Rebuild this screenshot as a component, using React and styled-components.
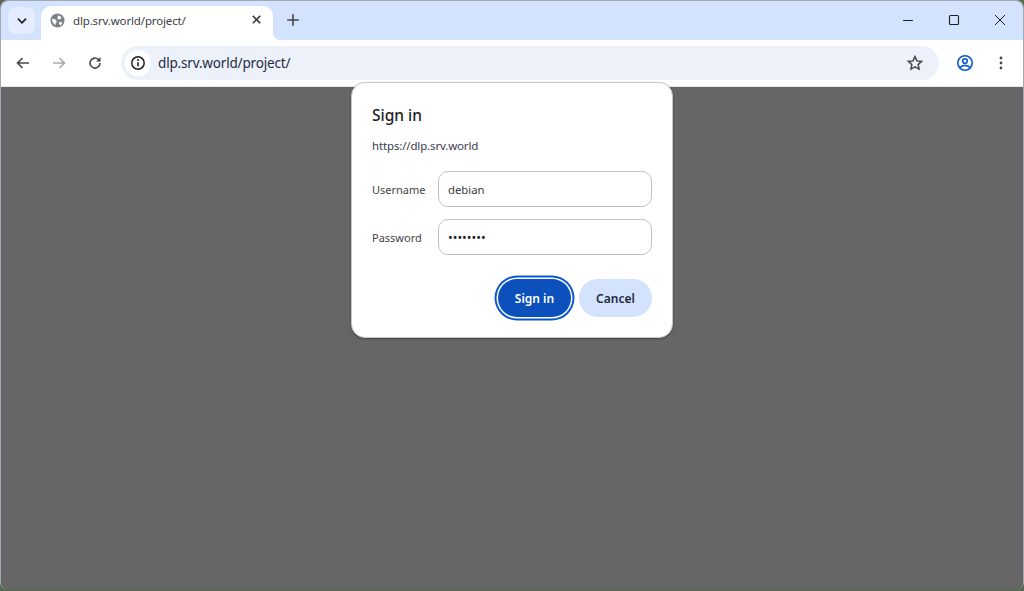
import React from 'react';
import styled, { createGlobalStyle } from 'styled-components';

const GlobalStyle = createGlobalStyle`
    html, body {
        margin:0;
        padding:0;
        height:100%;
        overflow:hidden;
        background:#56684f;
    }
    * { box-sizing:border-box; }
    body { font-family:"Noto Sans", "Open Sans", sans-serif; }
`;

const Win = styled.div`
    position:relative;
    width:1024px;
    height:590px;
    display:flex;
    flex-direction:column;
    border-radius:8px;
    overflow:hidden;
    background:#666;
    border:1px solid #a3a9b2;
    border-bottom:0;
`;

const TabStrip = styled.div`
    height:39px;
    flex:none;
    display:flex;
    align-items:flex-end;
    background:#d3e3fd;
    padding-left:7px;
`;

const TabSearch = styled.div`
    width:27px;
    height:27px;
    margin-bottom:6px;
    border-radius:8px;
    background:#e3edfd;
    display:flex;
    align-items:center;
    justify-content:center;
    color:#1f1f1f;
`;

const Tab = styled.div`
    position:relative;
    width:232px;
    height:34px;
    margin-left:6px;
    padding:0 9px 6px;
    display:flex;
    align-items:center;
    background:#fff;
    border-radius:10px 10px 0 0;
    color:#3c4043;
    font-size:11.5px;
    letter-spacing:-.15px;

    &::after {
        content:'';
        position:absolute;
        right:-8px;
        bottom:0;
        width:8px;
        height:8px;
        background:radial-gradient(circle at 100% 0, transparent 8px, #fff 8.5px);
    }
`;

const TabTitle = styled.span`
    flex:1;
    margin-left:8px;
    white-space:nowrap;
`;

const NewTab = styled.div`
    margin:0 0 12px 12px;
    width:16px;
    height:16px;
    display:flex;
    color:#444746;
`;

const WinControls = styled.div`
    margin-left:auto;
    display:flex;
    align-self:stretch;
    align-items:center;
    color:#1f1f1f;
    padding-bottom:2px;
`;

const WinButton = styled.div`
    width:46px;
    height:36px;
    display:flex;
    align-items:center;
    justify-content:center;
`;

const Toolbar = styled.div`
    height:47px;
    flex:none;
    display:flex;
    align-items:center;
    padding:1px 6px 1px 0;
    background:#fff;
    border-bottom:1px solid #e6e9ee;
`;

const NavButton = styled.div`
    width:36px;
    height:36px;
    flex:none;
    display:flex;
    align-items:center;
    justify-content:center;
    color:${p => (p.$off ? '#a6a8aa' : '#474747')};
`;

const NavGroup = styled.div`
    display:flex;
    padding-left:4px;
`;

const Omnibox = styled.div`
    flex:none;
    width:818px;
    height:34px;
    margin-left:8px;
    padding:0 6px 0 4px;
    display:flex;
    align-items:center;
    border-radius:17px;
    background:#edf2fa;
`;

const InfoChip = styled.div`
    width:26px;
    height:26px;
    border-radius:50%;
    background:#fff;
    display:flex;
    align-items:center;
    justify-content:center;
    color:#1f1f1f;
`;

const Url = styled.span`
    flex:1;
    margin-left:7px;
    font-size:13.5px;
    letter-spacing:-.17px;
    color:#1f2a44;
    white-space:nowrap;
`;

const Page = styled.div`
    flex:1;
    background:#666;
`;

const ToolGroup = styled.div`
    display:flex;
    margin-left:8px;
`;

const Dialog = styled.div`
    position:absolute;
    left:350px;
    top:81px;
    width:322px;
    height:256px;
    padding:20px 20px 0;
    display:flex;
    flex-direction:column;
    background:#fff;
    border-radius:14px;
    border:1px solid #c4c7c5;
    box-shadow:0 1px 2px rgba(0,0,0,.3);
`;

const Title = styled.div`
    font-size:15.5px;
    line-height:24px;
    font-weight:500;
    color:#1f1f1f;
`;

const Origin = styled.div`
    margin-top:9px;
    font-size:11.5px;
    letter-spacing:-.15px;
    line-height:20px;
    color:#3c3c50;
`;

const Form = styled.div`
    margin-top:15px;
    display:flex;
    flex-direction:column;
    gap:12px;
`;

const Row = styled.div`
    display:flex;
    align-items:center;
`;

const Label = styled.span`
    width:66px;
    flex:none;
    font-size:11px;
    color:#444;
`;

const Field = styled.div`
    flex:1;
    height:36px;
    padding:0 9px;
    display:flex;
    align-items:center;
    border:1px solid #c1c1c1;
    border-radius:10px;
    font-size:${p => (p.$secret ? '12.5px' : '11.3px')};
    color:${p => (p.$secret ? '#1f1f1f' : '#3c4043')};
`;

const Actions = styled.div`
    margin-top:24px;
    display:flex;
    justify-content:flex-end;
    gap:8px;
`;

const Btn = styled.div`
    width:73px;
    height:38px;
    border-radius:19px;
    display:flex;
    align-items:center;
    justify-content:center;
    font-size:12px;
    font-weight:600;
    background:${p => (p.$primary ? '#0b50bb' : '#d3e3fd')};
    color:${p => (p.$primary ? '#fff' : '#1f2937')};
    ${p => p.$primary && 'box-shadow:0 0 0 1.5px #fff, 0 0 0 3.5px #0b57d0;'}
`;

const Stroke = ({ size = 16, width = 1.6, children }) => (
    <svg width={size} height={size} viewBox="0 0 16 16" fill="none" stroke="currentColor" strokeWidth={width} strokeLinecap="square">
        {children}
    </svg>
);

function App() {
    return (
        <>
            <GlobalStyle />
            <Win>
                <TabStrip>
                    <TabSearch>
                        <Stroke size={14} width={2}><path d="M4 6l4 4 4-4" /></Stroke>
                    </TabSearch>
                    <Tab>
                        <svg width="15" height="15" viewBox="0 0 16 16">
                            <circle cx="8" cy="8" r="7.5" fill="#7d8185" />
                            <path d="M8.500 2.500 12.500 4.500 10.500 7 8 6.500zM2 6l4 1 1.500 2.500L6 10.500 6 13 3 10.500zM10 9.500l3.500.5-2.500 3.500L9.500 11z" fill="#fff" />
                        </svg>
                        <TabTitle>dlp.srv.world/project/</TabTitle>
                        <Stroke size={14} width={2}><path d="M4 4l7 7M11 4l-7 7" /></Stroke>
                    </Tab>
                    <NewTab>
                        <Stroke width={1.6}><path d="M8 3v10M3 8h10" /></Stroke>
                    </NewTab>
                    <WinControls>
                        <WinButton><Stroke width={1}><path d="M3 8.500h10" strokeLinecap="butt" /></Stroke></WinButton>
                        <WinButton><Stroke width={1.100}><rect x="3.500" y="3.500" width="9" height="9" rx="1" /></Stroke></WinButton>
                        <WinButton><Stroke width={1}><path d="M3 3l10 10M13 3L3 13" strokeLinecap="butt" /></Stroke></WinButton>
                    </WinControls>
                </TabStrip>
                <Toolbar>
                    <NavGroup>
                        <NavButton><Stroke width={1.6}><path d="M14 8H3M7.500 3L2.500 8l5 5" strokeLinecap="butt" /></Stroke></NavButton>
                        <NavButton $off><Stroke width={1.6}><path d="M2 8h11M8.500 3l5 5-5 5" strokeLinecap="butt" /></Stroke></NavButton>
                        <NavButton>
                            <Stroke width={1.6}>
                                <path d="M13 8a5 5 0 1 1-1.500-3.500L13 6" strokeLinecap="butt" />
                                <path d="M13.500 2v4.500H9z" fill="currentColor" stroke="none" />
                            </Stroke>
                        </NavButton>
                    </NavGroup>
                    <Omnibox>
                        <InfoChip>
                            <svg width="16" height="16" viewBox="0 0 16 16" fill="none" stroke="currentColor">
                                <circle cx="8" cy="8" r="6.200" strokeWidth="1.500" />
                                <path d="M8 7.200v4" strokeWidth="1.600" />
                                <circle cx="8" cy="5" r="1" fill="currentColor" stroke="none" />
                            </svg>
                        </InfoChip>
                        <Url>dlp.srv.world/project/</Url>
                        <NavButton>
                            <svg width="18" height="18" viewBox="0 0 24 24" fill="none" stroke="#474747" strokeWidth="2" strokeLinejoin="miter">
                                <path d="M12 3.500l2.600 5.700 6.200.7-4.600 4.200 1.300 6.100L12 17.200l-5.500 3 1.300-6.100-4.600-4.200 6.200-.7z" />
                            </svg>
                        </NavButton>
                    </Omnibox>
                    <ToolGroup>
                        <NavButton>
                            <svg width="18" height="18" viewBox="0 0 18 18" fill="none" stroke="#0b57d0" strokeWidth="1.600">
                                <circle cx="9" cy="9" r="7.200" />
                                <circle cx="9" cy="7" r="2.300" />
                                <path d="M4 13.600c1.200-1.600 3-2.200 5-2.200s3.800.6 5 2.200" />
                            </svg>
                        </NavButton>
                        <NavButton>
                            <svg width="16" height="16" viewBox="0 0 16 16" fill="#474747">
                                <circle cx="8" cy="3" r="1.400" />
                                <circle cx="8" cy="8" r="1.400" />
                                <circle cx="8" cy="13" r="1.400" />
                            </svg>
                        </NavButton>
                    </ToolGroup>
                </Toolbar>
                <Page />
                <Dialog>
                    <Title>Sign in</Title>
                    <Origin>https://dlp.srv.world</Origin>
                    <Form>
                        <Row>
                            <Label>Username</Label>
                            <Field>debian</Field>
                        </Row>
                        <Row>
                            <Label>Password</Label>
                            <Field $secret>••••••••</Field>
                        </Row>
                    </Form>
                    <Actions>
                        <Btn $primary>Sign in</Btn>
                        <Btn>Cancel</Btn>
                    </Actions>
                </Dialog>
            </Win>
        </>
    );
}

export default App;
